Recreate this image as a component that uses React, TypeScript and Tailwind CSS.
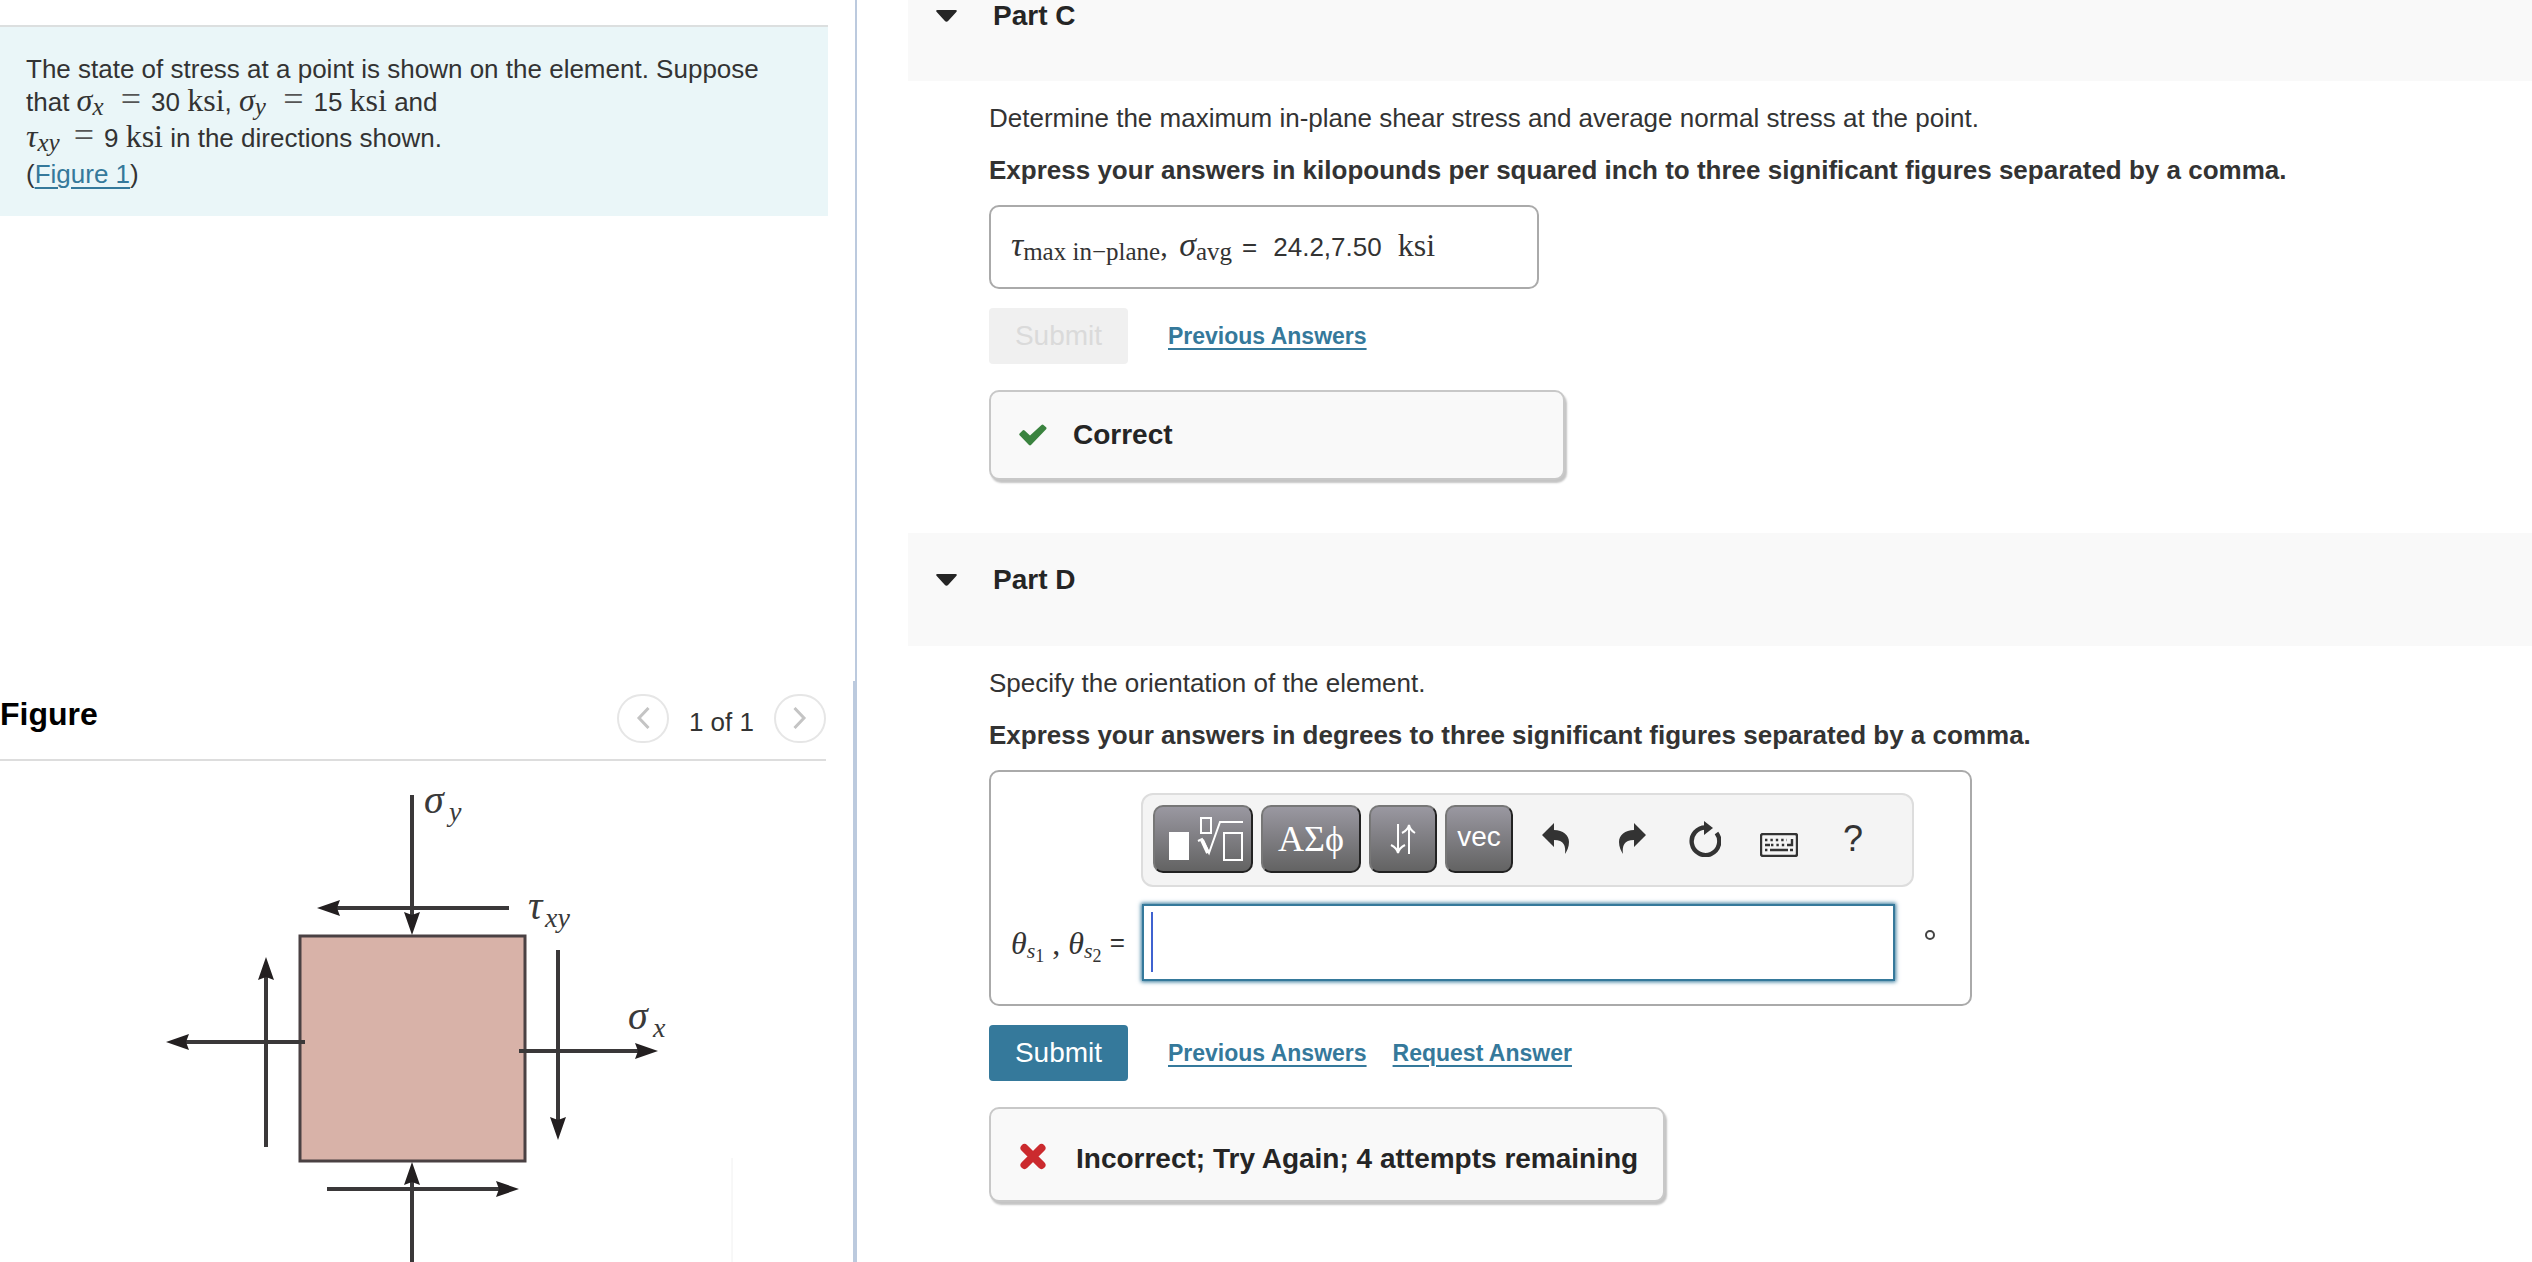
import React, { useState } from "react";

const SERIF = "font-['Liberation_Serif',serif]";
const MATH = "font-['Liberation_Serif',serif] leading-[0]";

function Sub({ children }: { children: React.ReactNode }) {
  return <sub className="bottom-0 align-[-4px] text-[25px] leading-[0]">{children}</sub>;
}

function Theta({ index }: { index: number }) {
  return (
    <i>
      θ
      <sub className="bottom-0 align-[-4px] text-[22px] leading-[0]">
        s<sub className="bottom-0 align-[-4px] text-[18px] not-italic">{index}</sub>
      </sub>
    </i>
  );
}

function Equals() {
  return <span className={`${MATH} px-[10px] text-[36px] text-[#555]`}>=</span>;
}

function Ksi() {
  return <span className={`${MATH} text-[32px]`}>ksi</span>;
}

function Arrow({ x1, y1, x2, y2 }: { x1: number; y1: number; x2: number; y2: number }) {
  const len = Math.hypot(x2 - x1, y2 - y1);
  const ux = (x2 - x1) / len;
  const uy = (y2 - y1) / len;
  const at = (back: number, side: number) =>
    `${x2 - ux * back - uy * side},${y2 - uy * back + ux * side}`;
  return (
    <g>
      <line x1={x1} y1={y1} x2={x2 - ux * 18} y2={y2 - uy * 18} stroke="#3a3839" strokeWidth={4} />
      <polygon points={`${at(0, 0)} ${at(23, 8)} ${at(20, 0)} ${at(23, -8)}`} fill="#231f20" />
    </g>
  );
}

function StressFigure() {
  return (
    <svg
      viewBox="0 761 826 501"
      className="block w-full"
      role="img"
      aria-label="Stress element"
      fontFamily="'Liberation Serif', serif"
      fontStyle="italic"
      fill="#3a3a3a"
    >
      <line x1={732} y1={1158} x2={732} y2={1262} stroke="#f0f0f0" strokeWidth={1} />
      <rect x={300} y={936} width={225} height={225} fill="#d8b2a8" stroke="#4a4143" strokeWidth={3} />
      <Arrow x1={509} y1={908} x2={317} y2={908} />
      <Arrow x1={412} y1={795} x2={412} y2={935} />
      <Arrow x1={266} y1={1147} x2={266} y2={957} />
      <Arrow x1={558} y1={950} x2={558} y2={1140} />
      <Arrow x1={305} y1={1042} x2={166} y2={1042} />
      <Arrow x1={519} y1={1051} x2={658} y2={1051} />
      <Arrow x1={327} y1={1189} x2={519} y2={1189} />
      <Arrow x1={412} y1={1270} x2={412} y2={1162} />
      <text x={424} y={813} fontSize={40}>σ</text>
      <text x={449} y={821} fontSize={28}>y</text>
      <text x={528} y={919} fontSize={40}>τ</text>
      <text x={545} y={927} fontSize={28}>xy</text>
      <text x={628} y={1029} fontSize={40}>σ</text>
      <text x={653} y={1037} fontSize={28}>x</text>
    </svg>
  );
}

function PartHeader({ title, className }: { title: string; className: string }) {
  return (
    <h2 className={`flex bg-[#f9f9f9] pl-7 text-[28px] leading-8 font-bold text-[#252525] ${className}`}>
      <button type="button" className="flex h-8 items-center gap-9">
        <svg width="21" height="12" viewBox="0 0 21 12" aria-hidden="true">
          <path d="M1.5 0h18q2 0 1 1.800l-8.200 9q-1.800 2-3.600 0l-8.200-9q-1-1.800 1-1.800z" fill="#252525" />
        </svg>
        {title}
      </button>
    </h2>
  );
}

const LINK = "text-[23px] leading-7 font-bold text-[#35799b] underline decoration-2 underline-offset-4";
const FEEDBACK =
  "flex items-center rounded-[10px] border-2 border-[#c8c8c8] bg-[#f9f9f9] pl-7 text-[28px] leading-8 font-bold text-[#252525] shadow-[2px_3px_2px_#c4c4c4]";
const TOOL = "flex h-[68px] items-center justify-center rounded-[10px] border-2 border-t-[#777] border-l-[#777] border-r-[#222] border-b-[#222] bg-linear-to-b from-[#9a98a1] to-[#636363] text-white";
const PAGER = "flex h-[49px] w-[52px] items-center justify-center rounded-full border-2 border-[#e6e6e6]";

export default function App() {
  const [answer, setAnswer] = useState("");
  return (
    <div className="flex h-screen overflow-hidden bg-white font-['Liberation_Sans',Arial,sans-serif] text-[26px] text-[#333]">
      <aside className="flex w-[857px] shrink-0 flex-col">
        <section className="flex h-[681px] flex-col border-r-2 border-[#bccade] pt-[25px] pr-[27px]">
          <div className="h-[191px] border-t-2 border-[#dcdfdf] bg-[#eaf6f8] pt-6 pl-[26px]">
            <p className="leading-9">The state of stress at a point is shown on the element. Suppose</p>
            <p className="-mt-[3px] leading-9">
              that <i className={`${MATH} text-[32px]`}>σ<Sub>x</Sub></i> <Equals />30 <Ksi />,{" "}
              <i className={`${MATH} text-[32px]`}>σ<Sub>y</Sub></i> <Equals />15 <Ksi /> and
            </p>
            <p className="leading-9">
              <i className={`${MATH} text-[32px]`}>τ<Sub>xy</Sub></i><span className="pl-1" /><Equals />9 <Ksi /> in the directions shown.
            </p>
            <p className="leading-9">
              (<a href="#figure" className="text-[#35799b] underline decoration-2 underline-offset-4">Figure 1</a>)
            </p>
          </div>
        </section>
        <section id="figure" className="flex-1 overflow-hidden border-r-4 border-[#bccade] pr-[27px]">
          <div className="flex h-20 items-center justify-between border-b-2 border-[#ddd] pb-1">
            <h2 className="pb-2 text-[32px] leading-10 font-bold text-black">Figure</h2>
            <div className="flex items-center gap-5">
              <button type="button" aria-label="Previous figure" className={PAGER}>
                <svg width="14" height="22" viewBox="0 0 14 22" fill="none" stroke="#c4c4c4" strokeWidth="3"><path d="M12.500 1L3 11l9.500 10" /></svg>
              </button>
              <span className="pt-2 leading-8">1 of 1</span>
              <button type="button" aria-label="Next figure" className={PAGER}>
                <svg width="14" height="22" viewBox="0 0 14 22" fill="none" stroke="#c4c4c4" strokeWidth="3"><path d="M1.500 1l9.500 10-9.500 10" /></svg>
              </button>
            </div>
          </div>
          <StressFigure />
        </section>
      </aside>

      <main className="min-w-0 flex-1 pl-[51px]">
        <PartHeader title="Part C" className="h-[81px]" />
        <div className="flex flex-col items-start pl-[81px]">
          <p className="mt-[19px] leading-9">Determine the maximum in-plane shear stress and average normal stress at the point.</p>
          <p className="mt-4 leading-9 font-bold">Express your answers in kilopounds per squared inch to three significant figures separated by a comma.</p>
          <div className="mt-[17px] flex h-[84px] w-[550px] items-baseline rounded-[10px] border-2 border-[#aaa] pt-[22px] pl-5 leading-9">
            <span className={`${MATH} text-[34px]`}>
              <i>τ</i><Sub>max in−plane</Sub><span className="pr-1 text-[30px]">, </span><i>σ</i><Sub>avg</Sub>
            </span>
            <span className="ml-[10px]">=</span>
            <span className="ml-4">24.2,7.50</span>
            <span className="ml-4"><Ksi /></span>
          </div>
          <div className="mt-[19px] flex h-14 items-center">
            <button type="button" disabled className="h-14 w-[139px] rounded-sm bg-[#f0f0f0] text-[28px] text-[#dadada]">Submit</button>
            <a href="#previous-c" className={`ml-10 ${LINK}`}>Previous Answers</a>
          </div>
          <div role="status" className={`mt-[26px] h-[90px] w-[576px] ${FEEDBACK}`}>
            <svg width="28" height="22" viewBox="0 0 28 22" aria-hidden="true">
              <path d="M.6 11.200q-.8-1 0-1.800l3-3q1-.8 2 0l5.400 5L22.500.9q1-.8 2 0l2.600 2.400q.9 1 0 2L12 21q-1 .8-2 0z" fill="#3a833f" />
            </svg>
            <span className="ml-[26px]">Correct</span>
          </div>
        </div>

        <PartHeader title="Part D" className="mt-[53px] h-[113px] pt-[31px]" />
        <div className="flex flex-col items-start pl-[81px]">
          <p className="mt-[19px] leading-9">Specify the orientation of the element.</p>
          <p className="mt-4 leading-9 font-bold">Express your answers in degrees to three significant figures separated by a comma.</p>
          <div className="mt-[17px] flex h-[236px] w-[983px] rounded-[10px] border-2 border-[#aaa] pt-[21px] pl-5">
            <label htmlFor="answer" className="flex w-[130px] items-center justify-between pt-[88px] pr-4">
              <span className={`${SERIF} text-[32px] leading-8`}>
                <Theta index={1} /> , <Theta index={2} />
              </span>
              <span>=</span>
            </label>
            <div>
              <div className="flex h-[94px] w-[773px] items-start rounded-xl border-2 border-[#ddd] bg-[#f4f4f4] pt-[10px] pl-[10px]">
                <div className="flex gap-2">
                  <button type="button" aria-label="Templates" className={`w-[100px] pl-1.5 ${TOOL}`}>
                    <svg width="76" height="46" viewBox="0 0 76 46" fill="none" stroke="#fff" strokeWidth="2">
                      <path d="M1 16h20v28H1z" fill="#fff" stroke="none" />
                      <path d="M33 2h10v15H33z" />
                      <path d="M30 25l4-2 7 14L52 6h23" />
                      <path d="M34 24l6 13" strokeWidth="4" />
                      <path d="M56 17h18v27H56z" />
                    </svg>
                  </button>
                  <button type="button" className={`w-[100px] text-[36px] leading-9 ${SERIF} ${TOOL}`}>ΑΣϕ</button>
                  <button type="button" aria-label="Arrows" className={`w-[68px] ${TOOL}`}>
                    <svg width="26" height="32" viewBox="0 0 26 32" fill="none" stroke="#fff" strokeWidth="2">
                      <path d="M8 1v28M1 22q6 3 7 8 1-5 7-8M19 31V3M12 10q6-3 7-8 1 5 6 8" />
                    </svg>
                  </button>
                  <button type="button" className={`w-[68px] pb-1 text-[28px] ${TOOL}`}>vec</button>
                </div>
                <button type="button" aria-label="Undo" className="mt-[18px] ml-[29px]">
                  <svg width="27" height="31" viewBox="0 0 27 31" fill="#333"><path d="M12 0v7c9 0 15 5 15 12 0 5-2 9-4 12 1-8-1-14-11-14v7L0 12z" /></svg>
                </button>
                <button type="button" aria-label="Redo" className="mt-[18px] ml-[50px]">
                  <svg width="27" height="31" viewBox="0 0 27 31" fill="#333"><path d="M15 0v7C6 7 0 12 0 19c0 5 2 9 4 12-1-8 1-14 11-14v7l12-12z" /></svg>
                </button>
                <button type="button" aria-label="Reset" className="mt-4 ml-[43px]">
                  <svg width="32" height="36" viewBox="0 0 32 36"><path d="M17 6.500A13.800 13.800 0 1 0 27.500 12" fill="none" stroke="#333" strokeWidth="4.400" /><path d="M15 0l9 7-9 7z" fill="#333" /></svg>
                </button>
                <button type="button" aria-label="Keyboard" className="mt-7 ml-[39px]">
                  <svg width="38" height="24" viewBox="0 0 38 24" fill="none" stroke="#333">
                    <rect x="1" y="1" width="36" height="22" rx="2" strokeWidth="2.400" />
                    <path d="M5 7h22M11 12h16" strokeWidth="2.400" strokeDasharray="2.400 3" />
                    <path d="M5 12h5M10 17h18M5 17h2.400M30 17h3M27 12h5V6" strokeWidth="2.400" />
                  </svg>
                </button>
                <button type="button" aria-label="Help" className="mt-[14px] ml-[45px] text-[36px] leading-10">?</button>
              </div>
              <div className="mt-[17px] flex items-center">
                <div className="relative w-[755px]">
                  <input
                    id="answer"
                    value={answer}
                    onChange={(e) => setAnswer(e.target.value)}
                    className="ml-px block h-[77px] w-[753px] border-2 border-[#35799b] bg-white px-2 shadow-[0_0_4px_1px_#35799b] outline-none"
                  />
                  {answer === "" && <span className="pointer-events-none absolute top-2 left-[10px] h-[60px] w-0.5 bg-[#3f62d0]" />}
                </div>
                <span className="mb-4 ml-[29px] size-[10px] rounded-full border-2 border-[#444]" aria-label="degrees" />
              </div>
            </div>
          </div>
          <div className="mt-[19px] flex h-14 items-center">
            <button type="button" className="h-14 w-[139px] rounded-sm bg-[#35799b] text-[28px] text-white">Submit</button>
            <a href="#previous-d" className={`ml-10 ${LINK}`}>Previous Answers</a>
            <a href="#request" className={`ml-[26px] ${LINK}`}>Request Answer</a>
          </div>
          <div role="status" className={`mt-[26px] h-[95px] w-[676px] pt-2 ${FEEDBACK}`}>
            <svg width="28" height="27" viewBox="0 0 28 27" className="mb-1" aria-hidden="true">
              <path d="M5.500 5l17 17M22.500 5l-17 17" fill="none" stroke="#cb2a2e" strokeWidth="8" strokeLinecap="round" />
            </svg>
            <span className="ml-[29px]">Incorrect; Try Again; 4 attempts remaining</span>
          </div>
        </div>
      </main>
    </div>
  );
}
